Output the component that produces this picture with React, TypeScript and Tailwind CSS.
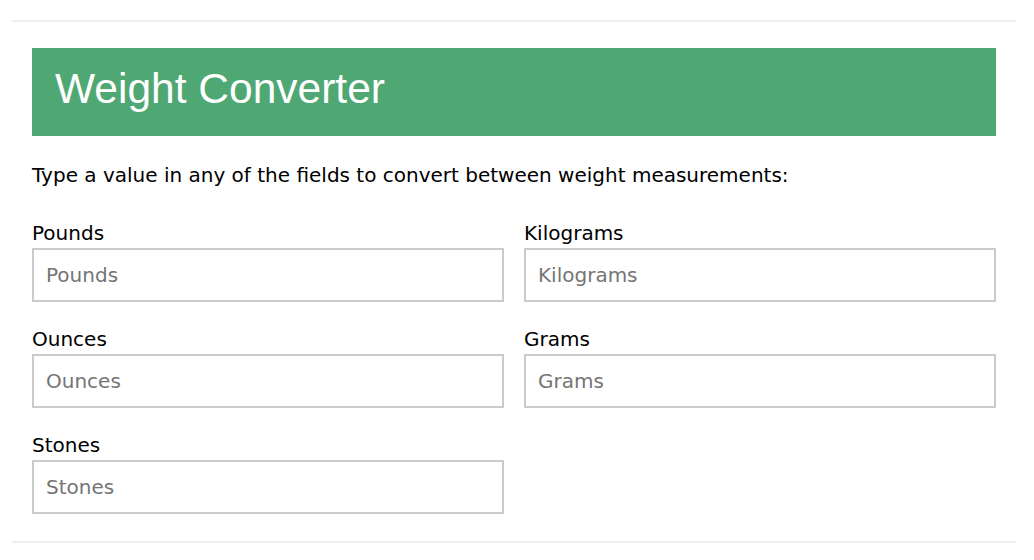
const FIELDS = ["Pounds", "Kilograms", "Ounces", "Grams", "Stones"];

export default function App() {
  return (
    <div className="bg-white pl-3 pr-[18px] pt-5 pb-4 font-['Verdana','DejaVu_Sans',sans-serif] text-black">
      <div className="h-[2px] bg-[#eeeeee]" />
      <div className="px-5">
        <div className="mt-[26px] h-[88px] bg-[#4fa873] pl-[23px] pb-[6px] flex items-center">
          <h1 className="text-[42.5px] leading-none text-white font-['Liberation_Sans',Arial,sans-serif]">
            Weight Converter
          </h1>
        </div>
        <p className="mt-[25px] text-[20px] leading-[29px]">
          Type a value in any of the fields to convert between weight measurements:
        </p>
        <div className="mt-[29px] grid grid-cols-2 gap-x-5 gap-y-[23px]">
          {FIELDS.map((f) => (
            <div key={f}>
              <label className="block text-[20px] leading-[29px]">{f}</label>
              <input
                type="number"
                placeholder={f}
                className="block w-full h-[54px] border-2 border-[#cccccc] px-3 text-[20px] outline-none placeholder:text-[#757575]"
              />
            </div>
          ))}
        </div>
      </div>
      <div className="mt-[27px] h-[2px] bg-[#eeeeee]" />
    </div>
  );
}
